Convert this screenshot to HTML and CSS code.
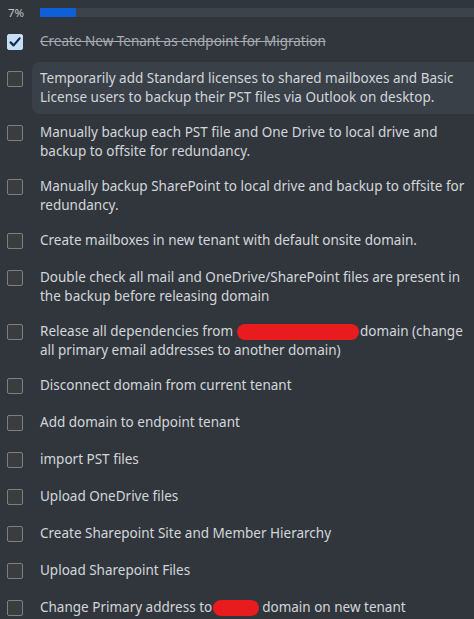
FILE: index.html
```html
<!DOCTYPE html>
<html>
<head>
<meta charset="utf-8">
<link rel="stylesheet" href="styles.css">
</head>
<body>
<div class="page">
  <div class="progress">
    <span class="pct">7%</span>
    <div class="track"><div class="fill" style="width:36px"></div></div>
  </div>
  <ul class="list">
    <li class="item done">
      <span class="box checked"><svg viewBox="0 0 16 16" width="16" height="16"><path d="M3.6 8.4 L6.6 11.4 L12.6 4.4" fill="none" stroke="#102a4a" stroke-width="2.2" stroke-linecap="round" stroke-linejoin="round"/></svg></span>
      <span class="text">Create New Tenant as endpoint for Migration</span>
    </li>
    <li class="item hover">
      <span class="box"></span>
      <span class="text">Temporarily add Standard licenses to shared mailboxes and Basic<br>License users to backup their PST files via Outlook on desktop.</span>
    </li>
    <li class="item">
      <span class="box"></span>
      <span class="text">Manually backup each PST file and One Drive to local drive and<br>backup to offsite for redundancy.</span>
    </li>
    <li class="item">
      <span class="box"></span>
      <span class="text">Manually backup SharePoint to local drive and backup to offsite for<br>redundancy.</span>
    </li>
    <li class="item">
      <span class="box"></span>
      <span class="text">Create mailboxes in new tenant with default onsite domain.</span>
    </li>
    <li class="item">
      <span class="box"></span>
      <span class="text">Double check all mail and OneDrive/SharePoint files are present in<br>the backup before releasing domain</span>
    </li>
    <li class="item">
      <span class="box"></span>
      <span class="text">Release all dependencies from <span class="redact long"></span> domain (change<br>all primary email addresses to another domain)</span>
    </li>
    <li class="item">
      <span class="box"></span>
      <span class="text">Disconnect domain from current tenant</span>
    </li>
    <li class="item">
      <span class="box"></span>
      <span class="text">Add domain to endpoint tenant</span>
    </li>
    <li class="item">
      <span class="box"></span>
      <span class="text">import PST files</span>
    </li>
    <li class="item">
      <span class="box"></span>
      <span class="text">Upload OneDrive files</span>
    </li>
    <li class="item">
      <span class="box"></span>
      <span class="text">Create Sharepoint Site and Member Hierarchy</span>
    </li>
    <li class="item">
      <span class="box"></span>
      <span class="text">Upload Sharepoint Files</span>
    </li>
    <li class="item">
      <span class="box"></span>
      <span class="text">Change Primary address to<span class="redact short"></span>domain on new tenant</span>
    </li>
  </ul>
</div>
</body>
</html>
```
FILE: styles.css
```css
html, body {
  margin: 0;
  padding: 0;
  background: #31363d;
  overflow: hidden;
}
.page {
  width: 474px;
  height: 619px;
  overflow: hidden;
  font-family: "Noto Sans", "Open Sans", sans-serif;
  color: #d3d6da;
}
.progress {
  display: flex;
  align-items: center;
  height: 25px;
  padding-left: 8px;
}
.pct {
  width: 32px;
  font-size: 11.5px;
  color: #c2c6cb;
}
.track {
  flex: 1;
  height: 9px;
  background: #3d434b;
  margin-right: -20px;
}
.fill {
  height: 100%;
  background: #0f5fd8;
  border-radius: 1px;
}
.list {
  list-style: none;
  margin: 0;
  padding: 0;
  display: flex;
  flex-direction: column;
  gap: 2px;
}
.item {
  display: flex;
  align-items: flex-start;
  min-height: 35px;
  box-sizing: border-box;
  padding: 7px 0;
  position: relative;
}
.item.hover::before {
  content: "";
  position: absolute;
  left: 32px;
  top: 0;
  bottom: 0;
  right: -20px;
  background: #3a4048;
  border-radius: 8px;
}
.box {
  position: relative;
  flex: none;
  width: 16px;
  height: 16px;
  box-sizing: border-box;
  margin: 2px 17px 0 7px;
  border: 1.5px solid #7b8087;
  background: #3b3c3d;
  border-radius: 2px;
}
.box.checked {
  background: #c8def6;
  border-color: #c8def6;
}
.box svg {
  position: absolute;
  left: -1.5px;
  top: -1.5px;
}
.text {
  position: relative;
  font-size: 13.5px;
  line-height: 19px;
  white-space: nowrap;
}
.done .text {
  text-decoration: line-through;
  color: #a6abb1;
}
.redact {
  display: inline-block;
  vertical-align: middle;
  height: 16px;
  background: #e81b1f;
  border-radius: 9px;
}
.redact.long {
  width: 122px;
  margin: 0 -2px 0 0;
}
.redact.short {
  width: 46px;
  margin: 0 3px 0 1px;
}
```
